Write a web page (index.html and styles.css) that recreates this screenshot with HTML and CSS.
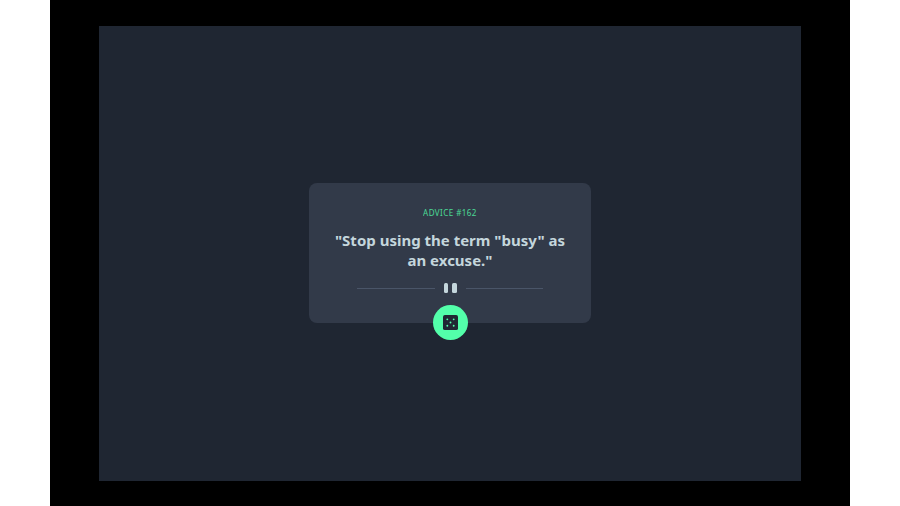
FILE: index.html
```html
<!DOCTYPE html>
<html lang="en">
<head>
<meta charset="utf-8">
<title>Advice generator</title>
<link rel="stylesheet" href="styles.css">
</head>
<body>
<main class="frame">
  <section class="panel">
    <article class="card">
      <p class="label">ADVICE #162</p>
      <h1 class="quote">"Stop using the term "busy" as an excuse."</h1>
      <div class="divider">
        <span class="rule"></span>
        <span class="pause"><i></i><i></i></span>
        <span class="rule"></span>
      </div>
      <button class="dice" type="button" aria-label="New advice">
        <svg width="15" height="15" viewBox="0 0 16 16" aria-hidden="true">
          <rect width="16" height="16" rx="2" fill="#202733"/>
          <g fill="#53ffaa">
            <circle cx="4.6" cy="4.6" r="1"/>
            <circle cx="11.4" cy="4.6" r="1"/>
            <circle cx="8" cy="8" r="1"/>
            <circle cx="4.6" cy="11.4" r="1"/>
            <circle cx="11.4" cy="11.4" r="1"/>
          </g>
        </svg>
      </button>
    </article>
  </section>
</main>
</body>
</html>
```
FILE: styles.css
```css
* { box-sizing: border-box; }
html, body { margin: 0; height: 100%; }
body { background: #fff; font-family: "Noto Sans", sans-serif; overflow: hidden; }
.frame {
  width: 800px;
  height: 506px;
  margin: 0 auto;
  background: #000;
  display: flex;
  flex-direction: column;
  align-items: center;
  padding-top: 26px;
}
.panel {
  width: 702px;
  height: 455px;
  background: #1f2632;
  display: flex;
  justify-content: center;
  padding-top: 157px;
}
.card {
  position: relative;
  width: 282px;
  height: 140px;
  background: #323a49;
  border-radius: 8px;
  display: flex;
  flex-direction: column;
  align-items: center;
  padding: 24px 24px 0;
}
.label {
  margin: 0;
  font-size: 8px;
  line-height: 11px;
  letter-spacing: 0.45px;
  color: #53ffaa;
  font-weight: 400;
  opacity: .8;
}
.quote {
  margin: 12px 0 0;
  font-size: 15px;
  line-height: 20px;
  font-weight: 700;
  text-align: center;
  color: #c4d6dc;
}
.divider {
  display: flex;
  align-items: center;
  justify-content: center;
  gap: 9px;
  margin-top: 10px;
  height: 16px;
  width: 186px;
}
.rule { flex: 1; height: 1px; background: #4a5568; }
.pause { display: flex; justify-content: space-between; width: 13px; }
.pause i { width: 4.5px; height: 10px; border-radius: 1.5px; background: #c4d6dc; }
.dice {
  position: absolute;
  left: 123.5px;
  top: 122px;
  width: 35px;
  height: 35px;
  padding: 0;
  border: 0;
  border-radius: 50%;
  background: #53ffaa;
  display: flex;
  align-items: center;
  justify-content: center;
}
```
